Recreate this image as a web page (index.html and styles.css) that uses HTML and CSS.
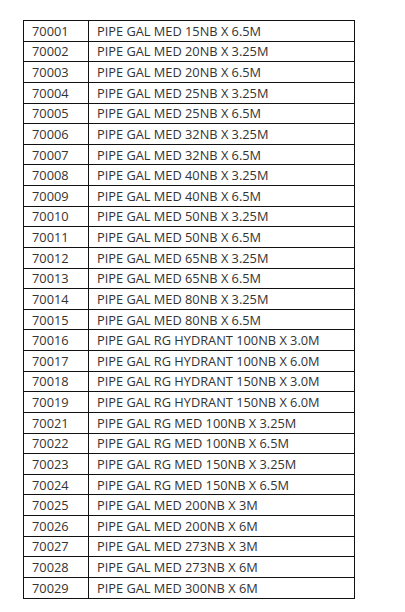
FILE: index.html
```html
<!DOCTYPE html>
<html>
<head>
<meta charset="utf-8">
<link rel="stylesheet" href="styles.css">
</head>
<body>
<div class="page">
<table class="items">
<tr><td class="code">70001</td><td class="desc">PIPE GAL MED 15NB X 6.5M</td></tr>
<tr><td class="code">70002</td><td class="desc">PIPE GAL MED 20NB X 3.25M</td></tr>
<tr><td class="code">70003</td><td class="desc">PIPE GAL MED 20NB X 6.5M</td></tr>
<tr><td class="code">70004</td><td class="desc">PIPE GAL MED 25NB X 3.25M</td></tr>
<tr><td class="code">70005</td><td class="desc">PIPE GAL MED 25NB X 6.5M</td></tr>
<tr><td class="code">70006</td><td class="desc">PIPE GAL MED 32NB X 3.25M</td></tr>
<tr><td class="code">70007</td><td class="desc">PIPE GAL MED 32NB X 6.5M</td></tr>
<tr><td class="code">70008</td><td class="desc">PIPE GAL MED 40NB X 3.25M</td></tr>
<tr><td class="code">70009</td><td class="desc">PIPE GAL MED 40NB X 6.5M</td></tr>
<tr><td class="code">70010</td><td class="desc">PIPE GAL MED 50NB X 3.25M</td></tr>
<tr><td class="code">70011</td><td class="desc">PIPE GAL MED 50NB X 6.5M</td></tr>
<tr><td class="code">70012</td><td class="desc">PIPE GAL MED 65NB X 3.25M</td></tr>
<tr><td class="code">70013</td><td class="desc">PIPE GAL MED 65NB X 6.5M</td></tr>
<tr><td class="code">70014</td><td class="desc">PIPE GAL MED 80NB X 3.25M</td></tr>
<tr><td class="code">70015</td><td class="desc">PIPE GAL MED 80NB X 6.5M</td></tr>
<tr><td class="code">70016</td><td class="desc">PIPE GAL RG HYDRANT 100NB X 3.0M</td></tr>
<tr><td class="code">70017</td><td class="desc">PIPE GAL RG HYDRANT 100NB X 6.0M</td></tr>
<tr><td class="code">70018</td><td class="desc">PIPE GAL RG HYDRANT 150NB X 3.0M</td></tr>
<tr><td class="code">70019</td><td class="desc">PIPE GAL RG HYDRANT 150NB X 6.0M</td></tr>
<tr><td class="code">70021</td><td class="desc">PIPE GAL RG MED 100NB X 3.25M</td></tr>
<tr><td class="code">70022</td><td class="desc">PIPE GAL RG MED 100NB X 6.5M</td></tr>
<tr><td class="code">70023</td><td class="desc">PIPE GAL RG MED 150NB X 3.25M</td></tr>
<tr><td class="code">70024</td><td class="desc">PIPE GAL RG MED 150NB X 6.5M</td></tr>
<tr><td class="code">70025</td><td class="desc">PIPE GAL MED 200NB X 3M</td></tr>
<tr><td class="code">70026</td><td class="desc">PIPE GAL MED 200NB X 6M</td></tr>
<tr><td class="code">70027</td><td class="desc">PIPE GAL MED 273NB X 3M</td></tr>
<tr><td class="code">70028</td><td class="desc">PIPE GAL MED 273NB X 6M</td></tr>
<tr><td class="code">70029</td><td class="desc">PIPE GAL MED 300NB X 6M</td></tr>
</table>
</div>
</body>
</html>
```
FILE: styles.css
```css
html, body {
  margin: 0;
  padding: 0;
  background: #ffffff;
}
.page {
  padding: 20px 0 0 23px;
}
.items {
  border-collapse: collapse;
  width: 332px;
  table-layout: fixed;
  font-family: "Open Sans", sans-serif;
  font-size: 12.8px;
  color: #333333;
}
.items tr {
  height: 20.64px;
}
.items td {
  border: 1px solid #111111;
  padding: 0 0 0 8px;
  vertical-align: middle;
  white-space: nowrap;
  line-height: 14px;
}
.items .code {
  width: 56px;
}
```
